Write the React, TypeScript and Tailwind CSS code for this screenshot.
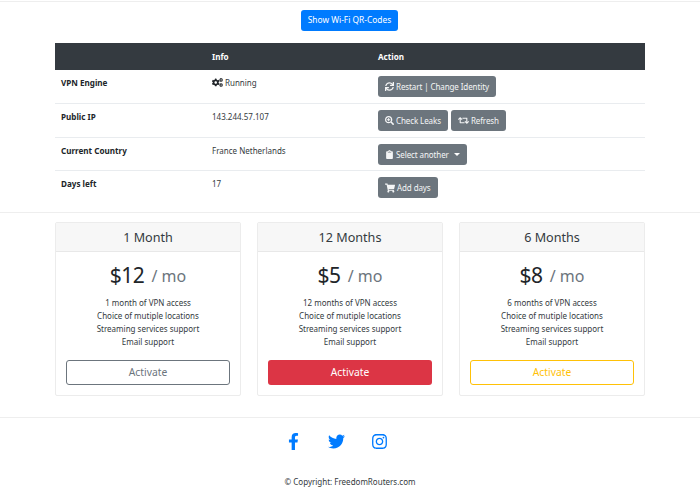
import { FaCogs, FaSync, FaSearchPlus, FaRetweet, FaClipboard, FaShoppingCart, FaFacebookF, FaTwitter, FaInstagram } from "react-icons/fa";
import type { ReactNode } from "react";

function Btn({ children }: { children: ReactNode }) {
  return (
    <span className="inline-flex h-[21px] items-center gap-[2px] rounded-[3px] bg-[#6c757d] px-[7px] text-[8px] tracking-[-0.1px] text-[#f4f5f6]">
      {children}
    </span>
  );
}

function Row({ label, info, action, h }: { label: string; info: ReactNode; action: ReactNode; h: string }) {
  return (
    <div className={`flex border-t border-[#e9ecef] ${h}`}>
      <div className="w-[151px] pl-[6px] pt-[6px] text-[8.1px] font-bold leading-[13px] text-[#212529]">{label}</div>
      <div className="w-[166px] pl-[6px] pt-[6px] text-[8px] leading-[13px] text-[#343a40]">{info}</div>
      <div className="flex gap-[3px] pl-[6px] pt-[6px]">{action}</div>
    </div>
  );
}

function Card({ title, price, first, btn }: { title: string; price: string; first: string; btn: string }) {
  return (
    <div className="h-[174px] w-[186px] rounded-[2px] border border-[#ececec] text-center text-[#212529]">
      <div className="h-[29px] border-b border-[#e8e8e8] bg-[#f7f7f7] pt-[1px] text-[12.6px] leading-[28px] text-[#343a40]">{title}</div>
      <div className="flex h-[44px] items-center justify-center pt-[2px]">
        <span className="text-[21px] leading-[30px] tracking-[-0.5px] text-[#212529]">{price}</span>
        <span className="ml-[7px] mt-[2px] text-[16px] leading-[24px] text-[#6c757d]">/ mo</span>
      </div>
      <div className="text-[8px] leading-[13px] text-[#343a40]">
        <div>{first}</div>
        <div>Choice of mutiple locations</div>
        <div>Streaming services support</div>
        <div>Email support</div>
      </div>
      <div className={`mx-[10px] mt-[12px] h-[25px] rounded-[3px] text-[10.3px] leading-[23px] ${btn}`}>Activate</div>
    </div>
  );
}

export default function App() {
  return (
    <div className="h-[493px] w-[700px] overflow-hidden bg-white pt-[1px] font-['Noto_Sans','Open_Sans',sans-serif]">
      <div className="border-t border-[#eeeeee]" />
      <div className="flex justify-center pr-[1px] pt-[8px]">
        <span className="flex h-[21px] w-[97px] items-center justify-center rounded-[3px] bg-[#007bff] text-[8.4px] text-white">
          Show Wi-Fi QR-Codes
        </span>
      </div>
      <div className="mx-[55px] mt-[12px]">
        <div className="flex h-[27px] items-center bg-[#343a40] pt-[1px] text-[8.1px] font-bold text-white">
          <div className="w-[151px]" />
          <div className="w-[166px] pl-[6px]">Info</div>
          <div className="pl-[6px]">Action</div>
        </div>
        <Row
          h="h-[33px] border-t-0"
          label="VPN Engine"
          info={
            <span className="flex items-center gap-[2px]">
              <FaCogs className="text-[11px] text-[#212529]" /> Running
            </span>
          }
          action={<Btn><FaSync className="text-[9px]" /> Restart | Change Identity</Btn>}
        />
        <Row
          h="h-[34px]"
          label="Public IP"
          info="143.244.57.107"
          action={
            <>
              <Btn><FaSearchPlus className="text-[9px]" /> Check Leaks</Btn>
              <Btn><FaRetweet className="text-[11px]" /> Refresh</Btn>
            </>
          }
        />
        <Row
          h="h-[33px]"
          label="Current Country"
          info="France Netherlands"
          action={
            <Btn>
              <FaClipboard className="text-[9px]" /> Select another
              <span className="ml-[3px] h-0 w-0 border-x-[3px] border-t-[3px] border-x-transparent border-t-white" />
            </Btn>
          }
        />
        <Row
          h="h-[42px]"
          label="Days left"
          info="17"
          action={<Btn><FaShoppingCart className="text-[10px]" /> Add days</Btn>}
        />
      </div>
      <div className="border-t border-[#eeeeee]" />
      <div className="mx-[55px] mt-[9px] flex justify-between">
        <Card title="1 Month" price="$12" first="1 month of VPN access" btn="border border-[#6c757d] text-[#6c757d]" />
        <Card title="12 Months" price="$5" first="12 months of VPN access" btn="bg-[#dc3545] text-white leading-[25px]" />
        <Card title="6 Months" price="$8" first="6 months of VPN access" btn="border border-[#ffc107] text-[#ffc107]" />
      </div>
      <div className="mt-[21px] border-t border-[#eeeeee]" />
      <div className="mt-[15px] flex justify-center gap-[26px] pr-[28px] text-[17px] text-[#007bff]">
        <FaFacebookF className="w-[17px]" />
        <FaTwitter className="w-[17px]" />
        <FaInstagram className="w-[17px]" />
      </div>
      <div className="mt-[25px] text-center text-[8px] leading-[13px] text-[#343a40]">© Copyright: FreedomRouters.com</div>
    </div>
  );
}
